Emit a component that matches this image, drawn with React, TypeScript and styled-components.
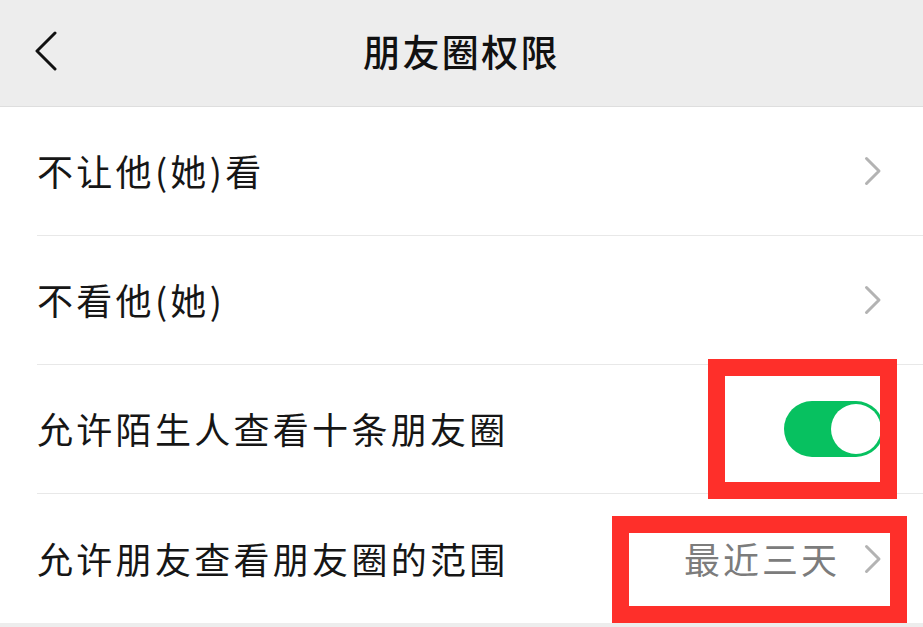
import React from "react";
import styled, { createGlobalStyle } from "styled-components";

const Global = createGlobalStyle`
  html, body { margin: 0; padding: 0; background: #ededed; }
  body { font-family: "Noto Sans CJK SC", "Noto Sans", sans-serif; }
`;

const Page = styled.div`
  position: relative;
  width: 923px;
  height: 627px;
  background: #ededed;
  overflow: hidden;
`;

const NavBar = styled.header`
  height: 106px;
  display: grid;
  grid-template-columns: 100px 1fr 100px;
  align-items: center;
  background: #ededed;
  border-bottom: 1px solid #dedede;
`;

const BackButton = styled.div`
  display: flex;
  align-items: center;
  padding-left: 33px;
  height: 100%;
  padding-bottom: 4px;
  box-sizing: border-box;
`;

const Title = styled.h1`
  margin: 0;
  text-align: center;
  font-size: 37px;
  font-weight: 500;
  color: #111;
  letter-spacing: 2.4px;
  padding-bottom: 4px;
`;

const List = styled.ul`
  list-style: none;
  margin: 0;
  padding: 0;
  background: #fff;
`;

const Row = styled.li`
  padding-left: 37px;
  height: 129px;
`;

const RowBody = styled.div<{ $last?: boolean }>`
  height: 100%;
  box-sizing: border-box;
  display: flex;
  align-items: center;
  justify-content: space-between;
  padding-right: 41px;
  border-bottom: ${(p) => (p.$last ? "none" : "1px solid #e8e8e8")};
`;

const Label = styled.span`
  font-size: 36px;
  letter-spacing: 3.3px;
  color: #161616;
  padding-bottom: 2px;
`;

const Trailing = styled.div`
  display: flex;
  align-items: center;
  gap: 24px;
`;

const Value = styled.span`
  font-size: 36px;
  letter-spacing: 3px;
  color: #7c7c7c;
  padding-bottom: 2px;
`;

const Switch = styled.div<{ $on: boolean }>`
  position: relative;
  width: 100px;
  height: 56px;
  border-radius: 28px;
  background: ${(p) => (p.$on ? "#07c160" : "#e5e5e5")};
  margin-right: -2px;
  &::after {
    content: "";
    position: absolute;
    top: 3px;
    ${(p) => (p.$on ? "right: 3px;" : "left: 3px;")}
    width: 50px;
    height: 50px;
    border-radius: 50%;
    background: #fff;
  }
`;

const Highlight = styled.div`
  position: absolute;
  border: 17px solid #fe2f2a;
  box-sizing: border-box;
  pointer-events: none;
`;

const Chevron = () => (
  <svg width="18" height="30" viewBox="0 0 18 30" fill="none">
    <path d="M2.5 2.5 L15 15 L2.5 27.5" stroke="#b3b3b3" strokeWidth="3" strokeLinecap="round" strokeLinejoin="round" />
  </svg>
);

const BackIcon = () => (
  <svg width="26" height="40" viewBox="0 0 26 40" fill="none">
    <path d="M22 2 L4 20 L22 38" stroke="#111" strokeWidth="3" strokeLinecap="round" strokeLinejoin="round" />
  </svg>
);

type Item = { label: string; kind: "link" | "switch"; value?: string };

const items: Item[] = [
  { label: "不让他(她)看", kind: "link" },
  { label: "不看他(她)", kind: "link" },
  { label: "允许陌生人查看十条朋友圈", kind: "switch" },
  { label: "允许朋友查看朋友圈的范围", kind: "link", value: "最近三天" },
];

export default function App() {
  return (
    <Page>
      <Global />
      <NavBar>
        <BackButton>
          <BackIcon />
        </BackButton>
        <Title>朋友圈权限</Title>
        <div />
      </NavBar>
      <List>
        {items.map((it, i) => (
          <Row key={it.label}>
            <RowBody $last={i === items.length - 1}>
              <Label>{it.label}</Label>
              <Trailing>
                {it.value && <Value>{it.value}</Value>}
                {it.kind === "switch" ? <Switch $on /> : <Chevron />}
              </Trailing>
            </RowBody>
          </Row>
        ))}
      </List>
      <Highlight style={{ left: 708, top: 359, width: 189, height: 140 }} />
      <Highlight style={{ left: 612, top: 516, width: 295, height: 107 }} />
    </Page>
  );
}
